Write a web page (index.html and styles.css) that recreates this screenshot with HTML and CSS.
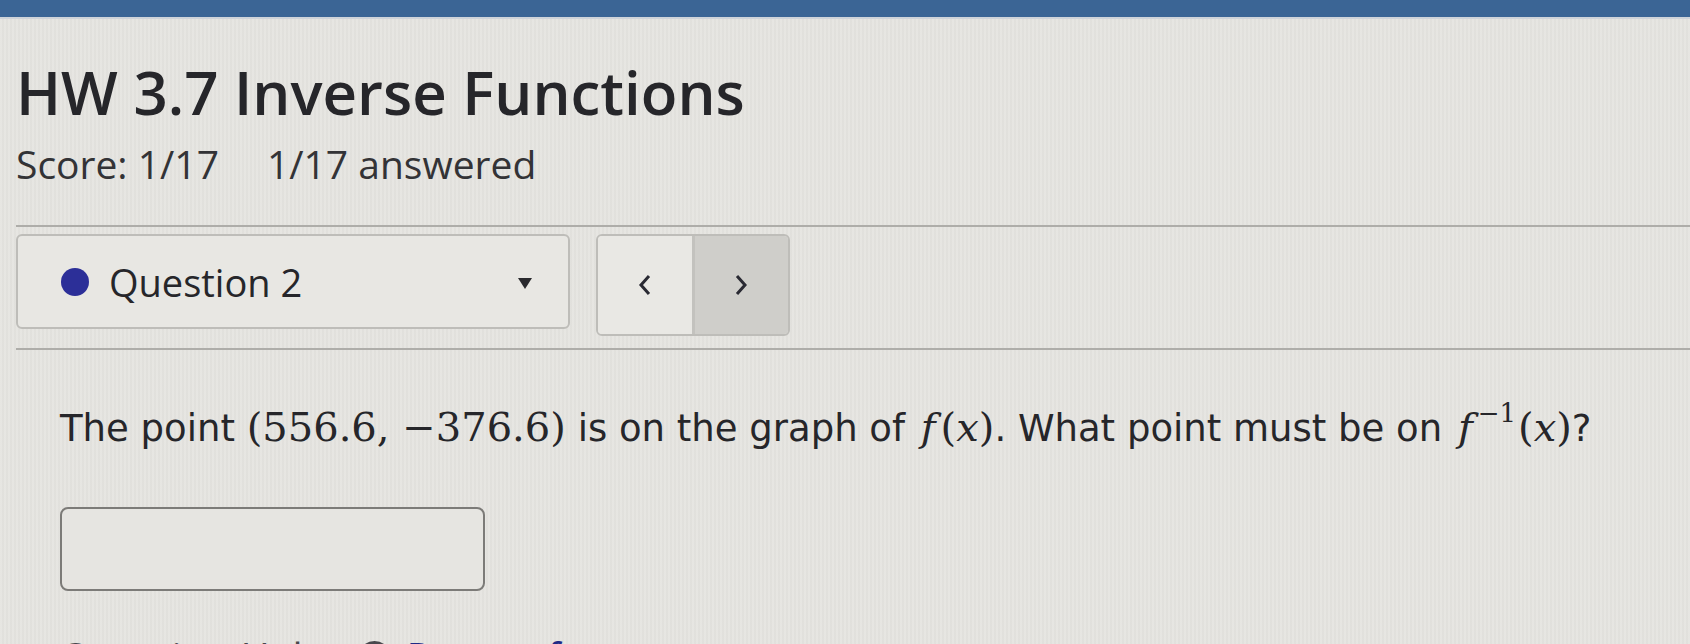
FILE: index.html
```html
<!DOCTYPE html>
<html lang="en">
<head>
  <meta charset="UTF-8" />
  <meta name="viewport" content="width=device-width, initial-scale=1.0"/>
  <title>HW 3.7 Inverse Functions</title>
  <link rel="stylesheet" href="styles.css">
</head>
<body>
  <div class="topbar"></div>

  <main class="page">
    <h1 class="title">HW 3.7 Inverse Functions</h1>
    <div class="score">
      <span>Score: 1/17</span>
      <span>1/17 answered</span>
    </div>

    <!-- Question picker -->
    <div class="qnav">
      <div class="qselect">
        <span class="dot"></span>
        <span class="qlabel">Question 2</span>
        <svg class="caret" width="14" height="11" viewBox="0 0 14 11"><polygon points="0,0 14,0 7,11" fill="#2a2a2e"/></svg>
      </div>
      <div class="pager">
        <button class="pg prev" aria-label="Previous question">
          <svg width="16" height="22" viewBox="0 0 16 22"><polyline points="12,2 4,11 12,20" fill="none" stroke="#2a2a33" stroke-width="3"/></svg>
        </button>
        <button class="pg next" aria-label="Next question">
          <svg width="16" height="22" viewBox="0 0 16 22"><polyline points="4,2 12,11 4,20" fill="none" stroke="#2a2a33" stroke-width="3"/></svg>
        </button>
      </div>
    </div>

    <!-- Question body -->
    <section class="question">
      <p class="qtext">The point <span class="math">(556.6, &minus;376.6)</span> is on the graph of <span class="math"><i class="fn">f</i>(<i>x</i>)</span>. What point must be on <span class="math"><i class="fn">f</i><sup>&minus;1</sup>(<i>x</i>)</span>?</p>
      <input class="answer" type="text" aria-label="Answer">
      <div class="help">
        <span class="help-label">Question Help:</span>
        <span class="help-icon"></span>
        <a class="help-link">Post to forum</a>
      </div>
    </section>
  </main>
</body>
</html>
```

FILE: styles.css
```css
html, body {
  height: 100%;
  overflow: hidden;
}
body {
  margin: 0;
  font-family: "Open Sans", "Noto Sans", sans-serif;
  color: #2a2a2e;
  background-color: #e5e4e0;
  background-image: repeating-linear-gradient(90deg, rgba(255,255,255,0.06) 0 2px, rgba(0,0,0,0.015) 2px 4px);
}
.topbar {
  height: 17px;
  background-color: #3b6595;
  border-bottom: 2px solid #cfd4da;
}
.page {
  padding-left: 16px;
}
.title {
  margin: 37px 0 0 0;
  font-size: 60px;
  font-weight: 600;
  line-height: 72px;
  color: #26262a;
}
.score {
  display: flex;
  gap: 48px;
  margin-top: 11px;
  font-size: 39px;
  line-height: 50px;
  color: #333336;
}
.qnav {
  display: flex;
  gap: 26px;
  margin-top: 36px;
  padding: 7px 0 12px 0;
  border-top: 2px solid #aeada9;
  border-bottom: 2px solid #aeada9;
}
.qselect {
  display: flex;
  align-items: center;
  width: 554px;
  height: 95px;
  box-sizing: border-box;
  padding: 0 36px 0 43px;
  border: 2px solid #bebdb9;
  border-radius: 6px;
  background-color: #e8e7e3;
}
.dot {
  width: 28px;
  height: 28px;
  border-radius: 50%;
  background-color: #2c2f98;
  margin-right: 20px;
}
.qlabel {
  flex: 1;
  font-size: 38px;
  color: #26262a;
}
.caret {
  margin-top: 4px;
}
.pager {
  display: flex;
  width: 190px;
  height: 98px;
  border: 2px solid #bebdb9;
  border-radius: 6px;
  overflow: hidden;
}
.pg {
  flex: 1;
  display: flex;
  align-items: center;
  justify-content: center;
  border: none;
  padding: 0;
  margin: 0;
}
.prev {
  background-color: #e9e8e4;
  border-right: 3px solid #c3c2be;
}
.next {
  background-color: #cfceca;
}
.question {
  padding-left: 44px;
}
.qtext {
  margin: 51px 0 0 0;
  font-family: "DejaVu Sans", Verdana, sans-serif;
  font-size: 37px;
  line-height: 52px;
  color: #26262a;
}
.math {
  font-family: "DejaVu Serif", "Liberation Serif", serif;
  font-size: 40px;
}
.math i {
  font-style: italic;
}
.math i.fn {
  margin: 0 5px 0 4px;
}
.math sup {
  font-size: 26px;
  vertical-align: 19px;
  line-height: 0;
  margin-right: 2px;
}
.answer {
  display: block;
  margin-top: 52px;
  width: 425px;
  height: 84px;
  box-sizing: border-box;
  border: 2px solid #7c7b78;
  border-radius: 8px;
  background-color: #e6e5e1;
}
.help {
  display: flex;
  align-items: center;
  gap: 16px;
  margin-top: 42px;
  font-size: 40px;
  line-height: 48px;
}
.help-label {
  color: #48484d;
}
.help-icon {
  width: 27px;
  height: 27px;
  border: 3px solid #48484d;
  border-radius: 50%;
  margin-left: 4px;
}
.help-link {
  color: #1f2a86;
}
```
